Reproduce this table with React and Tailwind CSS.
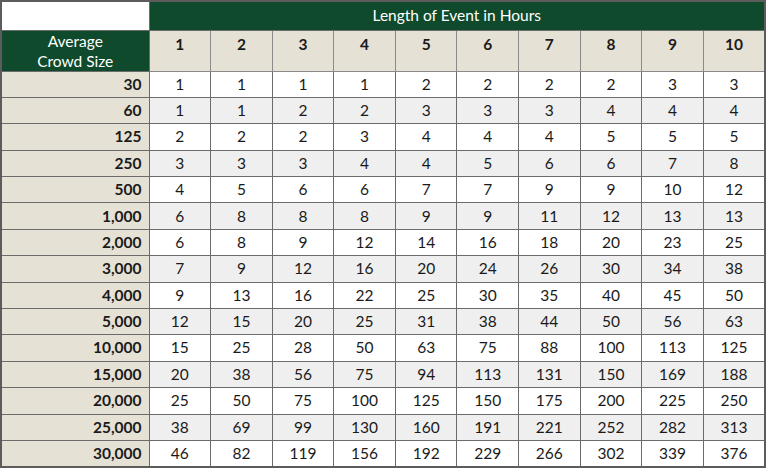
const hours = [1, 2, 3, 4, 5, 6, 7, 8, 9, 10];

const rows = [
  ["30", [1, 1, 1, 1, 2, 2, 2, 2, 3, 3]],
  ["60", [1, 1, 2, 2, 3, 3, 3, 4, 4, 4]],
  ["125", [2, 2, 2, 3, 4, 4, 4, 5, 5, 5]],
  ["250", [3, 3, 3, 4, 4, 5, 6, 6, 7, 8]],
  ["500", [4, 5, 6, 6, 7, 7, 9, 9, 10, 12]],
  ["1,000", [6, 8, 8, 8, 9, 9, 11, 12, 13, 13]],
  ["2,000", [6, 8, 9, 12, 14, 16, 18, 20, 23, 25]],
  ["3,000", [7, 9, 12, 16, 20, 24, 26, 30, 34, 38]],
  ["4,000", [9, 13, 16, 22, 25, 30, 35, 40, 45, 50]],
  ["5,000", [12, 15, 20, 25, 31, 38, 44, 50, 56, 63]],
  ["10,000", [15, 25, 28, 50, 63, 75, 88, 100, 113, 125]],
  ["15,000", [20, 38, 56, 75, 94, 113, 131, 150, 169, 188]],
  ["20,000", [25, 50, 75, 100, 125, 150, 175, 200, 225, 250]],
  ["25,000", [38, 69, 99, 130, 160, 191, 221, 252, 282, 313]],
  ["30,000", [46, 82, 119, 156, 192, 229, 266, 302, 339, 376]],
];

export default function App() {
  return (
    <div className="w-[768px] h-[475px] bg-white font-['Lato','Open_Sans',sans-serif] text-[#1a1a1a]">
      <table className="w-[766px] table-fixed border-collapse border-2 border-[#5c5c5c]">
        <colgroup>
          <col className="w-[148px]" />
          {hours.map((h) => (
            <col key={h} />
          ))}
        </colgroup>
        <thead>
          <tr className="h-[29px]">
            <th className="bg-white border border-[#6b6b6b]"></th>
            <th
              colSpan={10}
              className="bg-[#0e4a2b] text-white text-[15.5px] font-normal border border-[#6b6b6b]"
            >
              Length of Event in Hours
            </th>
          </tr>
          <tr className="h-[41px]">
            <th className="bg-[#0e4a2b] text-white text-[15.5px] font-normal leading-[20px] border border-[#6b6b6b]">
              Average
              <br />
              Crowd Size
            </th>
            {hours.map((h) => (
              <th
                key={h}
                className="bg-[#e6e1d5] text-[15.5px] font-bold align-top pt-[2px] border border-[#8a8a8a]"
              >
                {h}
              </th>
            ))}
          </tr>
        </thead>
        <tbody>
          {rows.map(([size, vals], i) => (
            <tr key={size} className="h-[26.4px]">
              <td className="bg-[#e6e1d5] text-right pr-[7px] text-[15.5px] font-bold border border-[#6b6b6b]">
                {size}
              </td>
              {vals.map((v, j) => (
                <td
                  key={j}
                  className={
                    "text-center text-[15.5px] border border-[#6b6b6b] " +
                    (i % 2 === 0 ? "bg-white" : "bg-[#efefef]")
                  }
                >
                  {v}
                </td>
              ))}
            </tr>
          ))}
        </tbody>
      </table>
    </div>
  );
}
